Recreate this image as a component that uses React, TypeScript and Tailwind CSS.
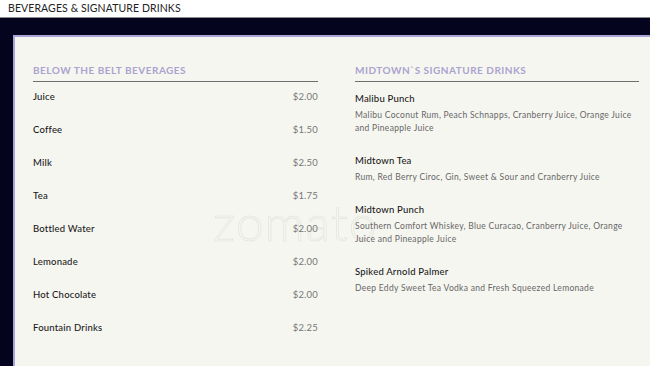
const beverages = [
  { name: "Juice", price: "$2.00" },
  { name: "Coffee", price: "$1.50" },
  { name: "Milk", price: "$2.50" },
  { name: "Tea", price: "$1.75" },
  { name: "Bottled Water", price: "$2.00" },
  { name: "Lemonade", price: "$2.00" },
  { name: "Hot Chocolate", price: "$2.00" },
  { name: "Fountain Drinks", price: "$2.25" },
];

const signature = [
  {
    name: "Malibu Punch",
    desc: "Malibu Coconut Rum, Peach Schnapps, Cranberry Juice, Orange Juice and Pineapple Juice",
  },
  {
    name: "Midtown Tea",
    desc: "Rum, Red Berry Ciroc, Gin, Sweet & Sour and Cranberry Juice",
  },
  {
    name: "Midtown Punch",
    desc: "Southern Comfort Whiskey, Blue Curacao, Cranberry Juice, Orange Juice and Pineapple Juice",
  },
  {
    name: "Spiked Arnold Palmer",
    desc: "Deep Eddy Sweet Tea Vodka and Fresh Squeezed Lemonade",
  },
];

const App = () => {
  return (
    <div className="w-[650px] h-[366px] overflow-hidden bg-white flex flex-col font-['Lato','Open_Sans',sans-serif]">
      {/* ── page title bar ── */}
      <div className="h-[18px] shrink-0 border-b border-[#8a8a8a] flex items-center pl-[8px]">
        <span className="text-[10.5px] leading-none text-[#222] tracking-[0.1px]">
          BEVERAGES &amp; SIGNATURE DRINKS
        </span>
      </div>

      <div className="flex-1 bg-[#05041f] pt-[17px] pl-[13px] flex flex-col">
        <div className="relative flex-1 bg-[#f6f6f1] border-t-[2px] border-l-[2px] border-[#aaa4d8] grid grid-cols-[285px_284px] gap-x-[37px] pl-[18px] pt-[27px]">
          {/* faint watermark */}
          <div className="absolute left-[198px] top-[160px] text-[50px] leading-none font-light text-transparent [-webkit-text-stroke:0.6px_#e2e2da] tracking-[1px] pointer-events-none select-none">
            zomato
          </div>

          <div className="relative">
            <h2 className="text-[10px] leading-[12px] font-bold tracking-[0.5px] text-[#aaa3cf] pb-[5px] border-b border-[#6f6f6f]">
              BELOW THE BELT BEVERAGES
            </h2>
            <div className="flex flex-col pt-[9px]">
              {beverages.map((b) => (
                <div
                  key={b.name}
                  className="h-[33px] flex justify-between text-[9.5px] leading-[12px] tracking-[0.2px]"
                >
                  <span className="text-[#1a1a1a] font-medium">{b.name}</span>
                  <span className="text-[#777]">{b.price}</span>
                </div>
              ))}
            </div>
          </div>

          <div className="relative">
            <h2 className="text-[10px] leading-[12px] font-bold tracking-[0.5px] text-[#aaa3cf] pb-[5px] border-b border-[#6f6f6f]">
              MIDTOWN`S SIGNATURE DRINKS
            </h2>
            <div className="flex flex-col gap-[20px] pt-[11px]">
              {signature.map((s) => (
                <div key={s.name} className="flex flex-col gap-[4px]">
                  <span className="text-[9.5px] leading-[12px] text-[#1a1a1a] font-medium tracking-[0.2px]">
                    {s.name}
                  </span>
                  <p className="text-[8.5px] leading-[13px] text-[#666] tracking-[0.3px] pr-[6px]">
                    {s.desc}
                  </p>
                </div>
              ))}
            </div>
          </div>
        </div>
      </div>
    </div>
  );
};

export default App;
